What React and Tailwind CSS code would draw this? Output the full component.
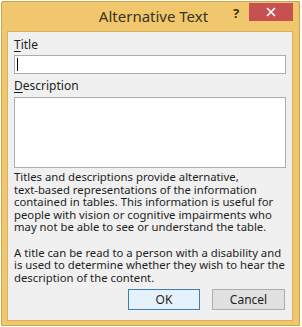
export default function App() {
  const font = { fontFamily: '"Noto Sans", "Open Sans", sans-serif' };
  return (
    <div className="w-[302px] h-[327px] bg-white" style={font}>
      <div className="ml-[1px] mt-[1px] w-[299px] h-[325px] border border-[#cfa24c] bg-[#f0c76c] rounded-tl-[2px] flex flex-col">
        {/* title bar */}
        <div className="h-[29px] flex items-start shrink-0">
          <div className="flex-1 pl-[72px] pt-[3px] text-center text-[15px] text-[#3b3220]">
            Alternative Text
          </div>
          <div className="w-[14px] pt-[2px] mr-[2px] text-[13px] font-bold text-[#3b3220]">?</div>
          <button className="mt-[1px] mr-[6px] w-[44px] h-[18px] bg-[#c75050] flex items-center justify-center">
            <svg width="10" height="10" viewBox="0 0 10 10">
              <path d="M1 1 L9 9 M9 1 L1 9" stroke="white" strokeWidth="1.6" />
            </svg>
          </button>
        </div>
        {/* client */}
        <div className="ml-[5px] mr-[6px] mb-[4px] flex-1 border border-[#d8b062] bg-[#f0f0f0] px-[6px] pt-[5px] flex flex-col text-[#1e1e1e]">
          <label className="text-[12px] leading-[16px]">
            <span className="underline underline-offset-2">T</span>itle
          </label>
          <div className="mt-[2px] h-[19px] border border-[#abadb3] bg-white flex items-center pl-[2px]">
            <div className="w-[1px] h-[13px] bg-black" />
          </div>
          <label className="mt-[4px] text-[12px] leading-[16px]">
            <span className="underline underline-offset-2">D</span>escription
          </label>
          <div className="mt-[3px] h-[71px] border border-[#abadb3] bg-white" />
          <p className="mt-[3px] whitespace-nowrap text-[11.3px] leading-[12.6px]">
            Titles and descriptions provide alternative,<br />
            text-based representations of the information<br />
            contained in tables. This information is useful for<br />
            people with vision or cognitive impairments who<br />
            may not be able to see or understand the table.
          </p>
          <p className="mt-[12.6px] whitespace-nowrap text-[11.3px] leading-[12.6px]">
            A title can be read to a person with a disability and<br />
            is used to determine whether they wish to hear the<br />
            description of the content.
          </p>
          <div className="mt-[5px] flex justify-end gap-[12px] pr-[1px]">
            <button className="w-[72px] h-[21px] border border-[#3c7fb1] bg-[#e5f1fb] text-[12px] text-[#1e1e1e]">
              OK
            </button>
            <button className="w-[73px] h-[21px] border border-[#adadad] bg-[#e1e1e1] text-[12px] text-[#1e1e1e]">
              Cancel
            </button>
          </div>
        </div>
      </div>
    </div>
  );
}
